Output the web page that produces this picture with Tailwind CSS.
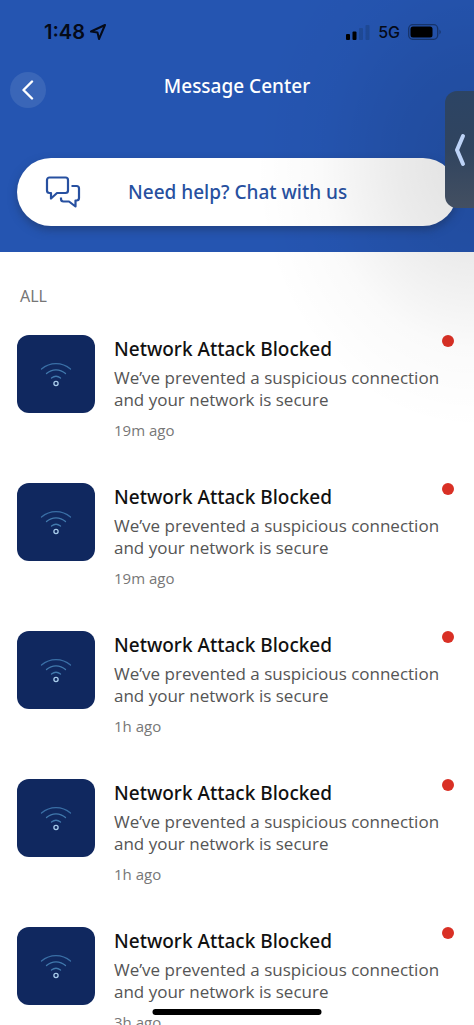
<!DOCTYPE html>
<html lang="en">
<head>
<meta charset="utf-8">
<meta name="viewport" content="width=device-width, initial-scale=1">
<title>Message Center</title>
<script src="https://cdn.jsdelivr.net/npm/@tailwindcss/browser@4"></script>
</head>
<body class="bg-white font-['Noto_Sans','Open_Sans',sans-serif]">
<svg class="hidden" aria-hidden="true">
  <symbol id="wifi" viewBox="0 0 32 26" fill="none" stroke-linecap="round">
    <path d="M1.500 8C10 .8 22 .8 30.500 8" stroke="#3a6fa6" stroke-width="1.300"/>
    <path d="M6.500 12.500C12 7.600 20 7.600 25.500 12.500" stroke="#4179ad" stroke-width="1.300"/>
    <path d="M11.500 17C14.300 14.800 17.700 14.800 20.500 17" stroke="#4179ad" stroke-width="1.300"/>
    <circle cx="16" cy="22.500" r="2.100" stroke="#a9cdec" stroke-width="1.300"/>
  </symbol>
</svg>
<div class="relative flex h-dvh flex-col overflow-hidden">
  <header class="shrink-0 bg-[#2555b1] pb-[26px]">
    <div class="flex h-16 items-center justify-between pl-11 pr-8 font-['Inter','Liberation_Sans',sans-serif] text-[#050a18]">
      <div class="flex items-center gap-1">
        <span class="text-xl font-semibold">1:48</span>
        <svg class="size-[18px]" viewBox="0 0 18 18" fill="none" stroke="currentColor" stroke-width="2" stroke-linejoin="round"><path d="M16 2L2 8.500L8.500 9.500L10 16Z"/></svg>
      </div>
      <div class="flex items-center gap-2">
        <svg class="h-4 w-6" viewBox="0 0 24 16"><rect y="10" width="4" height="6" rx="1"/><rect x="6.500" y="7.500" width="4" height="8.500" rx="1"/><rect x="13" y="4" width="4" height="12" rx="1" fill="#1f4a97"/><rect x="19.500" y="1" width="4" height="15" rx="1" fill="#1f4a97"/></svg>
        <span class="text-base font-medium">5G</span>
        <svg class="h-4 w-[34px]" viewBox="0 0 34 16"><rect x=".7" y=".7" width="29" height="14.600" rx="4" fill="none" stroke="#17366f" stroke-width="1.300"/><rect x="2.500" y="2.500" width="22" height="11" rx="2.500" fill="#000"/><path d="M31.500 5.500Q34 8 31.500 10.500Z" fill="#17366f"/></svg>
      </div>
    </div>
    <div class="grid h-[94px] grid-cols-[36px_1fr_36px] items-start px-[10px] pt-2">
      <button type="button" aria-label="Back" class="grid size-9 place-items-center rounded-full bg-[#3a66b8]">
        <svg class="h-5 w-3" viewBox="0 0 12 20" fill="none" stroke="#fff" stroke-width="2.400" stroke-linecap="round" stroke-linejoin="round"><path d="M10 1.500L1.500 10L10 18.500"/></svg>
      </button>
      <h1 class="text-center text-[19px] leading-7 font-medium text-white">Message Center</h1>
    </div>
    <button type="button" class="mx-[17px] flex h-[68px] w-[calc(100%-34px)] items-center rounded-full bg-white pl-7 text-left text-[19px] font-medium text-[#2750a0] shadow-[0_4px_8px_rgba(30,50,90,0.5)]">
      <svg class="mr-[47px] h-8 w-9 shrink-0" viewBox="0 0 36 32" fill="none" stroke="#2750a0" stroke-width="2.200" stroke-linejoin="round"><path d="M4.500 1.500H20.500A2.500 2.500 0 0 1 23 4V14.500A2.500 2.500 0 0 1 20.500 17H12L6 22.500V17H4.500A2.500 2.500 0 0 1 2 14.500V4A2.500 2.500 0 0 1 4.500 1.500Z"/><path d="M26.500 10H31.500A2.500 2.500 0 0 1 34 12.500V22A2.500 2.500 0 0 1 31.500 24.500H30.500V30.500L24 25.500H18.500A2.500 2.500 0 0 1 16 23V21.500"/></svg>
      <span>Need help? Chat with us</span>
    </button>
  </header>
  <main class="min-h-0 flex-1 overflow-hidden">
    <h2 class="px-5 pt-8 text-base leading-6 text-[#767676]">ALL</h2>
    <ul class="pt-[27px]">
      <li class="flex h-[148px] items-start pl-[17px] pr-[20px]">
        <div class="grid size-[78px] shrink-0 place-items-center rounded-xl bg-[#10285f]"><svg class="h-[26px] w-8"><use href="#wifi"/></svg></div>
        <div class="ml-[19px] flex-1 pt-[2px]">
          <h3 class="text-[19px] leading-6 font-medium text-[#111]">Network Attack Blocked</h3>
          <p class="mt-[6px] font-['Open_Sans','Noto_Sans',sans-serif] text-[17px] leading-[22px] text-[#555]">We’ve prevented a suspicious connection<br>and your network is secure</p>
          <time class="mt-2 block font-['Open_Sans','Noto_Sans',sans-serif] text-[15px] leading-[22px] text-[#777]">19m ago</time>
        </div>
        <span class="-ml-3 size-3 shrink-0 rounded-full bg-[#d93025]"></span>
      </li>
      <li class="flex h-[148px] items-start pl-[17px] pr-[20px]">
        <div class="grid size-[78px] shrink-0 place-items-center rounded-xl bg-[#10285f]"><svg class="h-[26px] w-8"><use href="#wifi"/></svg></div>
        <div class="ml-[19px] flex-1 pt-[2px]">
          <h3 class="text-[19px] leading-6 font-medium text-[#111]">Network Attack Blocked</h3>
          <p class="mt-[6px] font-['Open_Sans','Noto_Sans',sans-serif] text-[17px] leading-[22px] text-[#555]">We’ve prevented a suspicious connection<br>and your network is secure</p>
          <time class="mt-2 block font-['Open_Sans','Noto_Sans',sans-serif] text-[15px] leading-[22px] text-[#777]">19m ago</time>
        </div>
        <span class="-ml-3 size-3 shrink-0 rounded-full bg-[#d93025]"></span>
      </li>
      <li class="flex h-[148px] items-start pl-[17px] pr-[20px]">
        <div class="grid size-[78px] shrink-0 place-items-center rounded-xl bg-[#10285f]"><svg class="h-[26px] w-8"><use href="#wifi"/></svg></div>
        <div class="ml-[19px] flex-1 pt-[2px]">
          <h3 class="text-[19px] leading-6 font-medium text-[#111]">Network Attack Blocked</h3>
          <p class="mt-[6px] font-['Open_Sans','Noto_Sans',sans-serif] text-[17px] leading-[22px] text-[#555]">We’ve prevented a suspicious connection<br>and your network is secure</p>
          <time class="mt-2 block font-['Open_Sans','Noto_Sans',sans-serif] text-[15px] leading-[22px] text-[#777]">1h ago</time>
        </div>
        <span class="-ml-3 size-3 shrink-0 rounded-full bg-[#d93025]"></span>
      </li>
      <li class="flex h-[148px] items-start pl-[17px] pr-[20px]">
        <div class="grid size-[78px] shrink-0 place-items-center rounded-xl bg-[#10285f]"><svg class="h-[26px] w-8"><use href="#wifi"/></svg></div>
        <div class="ml-[19px] flex-1 pt-[2px]">
          <h3 class="text-[19px] leading-6 font-medium text-[#111]">Network Attack Blocked</h3>
          <p class="mt-[6px] font-['Open_Sans','Noto_Sans',sans-serif] text-[17px] leading-[22px] text-[#555]">We’ve prevented a suspicious connection<br>and your network is secure</p>
          <time class="mt-2 block font-['Open_Sans','Noto_Sans',sans-serif] text-[15px] leading-[22px] text-[#777]">1h ago</time>
        </div>
        <span class="-ml-3 size-3 shrink-0 rounded-full bg-[#d93025]"></span>
      </li>
      <li class="flex h-[148px] items-start pl-[17px] pr-[20px]">
        <div class="grid size-[78px] shrink-0 place-items-center rounded-xl bg-[#10285f]"><svg class="h-[26px] w-8"><use href="#wifi"/></svg></div>
        <div class="ml-[19px] flex-1 pt-[2px]">
          <h3 class="text-[19px] leading-6 font-medium text-[#111]">Network Attack Blocked</h3>
          <p class="mt-[6px] font-['Open_Sans','Noto_Sans',sans-serif] text-[17px] leading-[22px] text-[#555]">We’ve prevented a suspicious connection<br>and your network is secure</p>
          <time class="mt-2 block font-['Open_Sans','Noto_Sans',sans-serif] text-[15px] leading-[22px] text-[#777]">3h ago</time>
        </div>
        <span class="-ml-3 size-3 shrink-0 rounded-full bg-[#d93025]"></span>
      </li>
    </ul>
  </main>
  <!-- soft shade cast by the floating side tab -->
  <div class="pointer-events-none absolute top-0 right-0 h-[440px] w-[240px] bg-[radial-gradient(ellipse_220px_270px_at_100%_160px,rgba(0,0,0,0.12),rgba(0,0,0,0.08)_35%,rgba(0,0,0,0.02)_70%,transparent)]"></div>
  <button type="button" aria-label="Open side panel" class="absolute top-[91px] right-0 grid h-[117px] w-[29px] place-items-center rounded-l-xl bg-linear-to-b from-[#2c4464] via-[#30445f] to-[#434f61]">
    <svg class="h-9 w-3" viewBox="0 0 12 36" fill="none" stroke="#bdd3f7" stroke-width="4" stroke-linecap="round" stroke-linejoin="round"><path d="M9 4L3 18L9 32"/></svg>
  </button>
  <div class="absolute bottom-[10px] left-1/2 h-[6px] w-[169px] -translate-x-1/2 rounded-full bg-black"></div>
</div>
</body>
</html>
